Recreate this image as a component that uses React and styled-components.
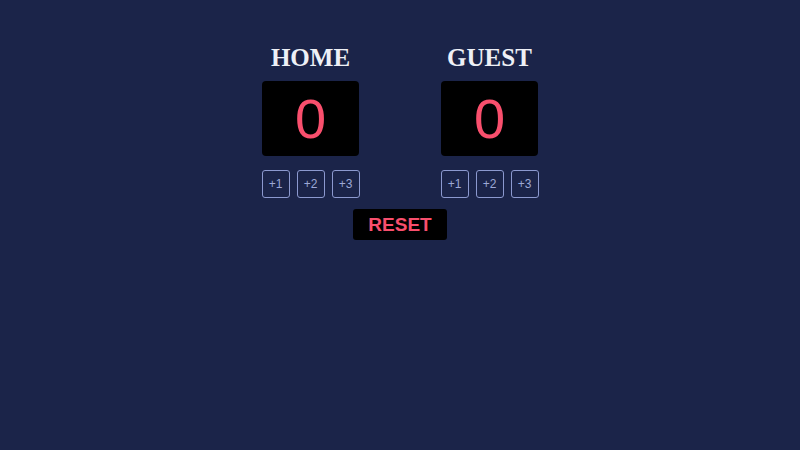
import React, { useState } from 'react'
import styled, { createGlobalStyle } from 'styled-components'

const GlobalStyle = createGlobalStyle`
  html, body {
    margin: 0;
    padding: 0;
    background: #1b2449;
    height: 100%;
  }
`

const Board = styled.main`
  display: flex;
  flex-direction: column;
  align-items: center;
  padding-top: 44px;
  font-family: "Liberation Sans", Arial, sans-serif;
`

const Teams = styled.div`
  display: flex;
  gap: 82px;
`

const Team = styled.section`
  display: flex;
  flex-direction: column;
  align-items: center;
  width: 97px;
`

const TeamName = styled.h2`
  margin: 0 0 9px;
  font-family: "Liberation Serif", "Times New Roman", serif;
  font-size: 25px;
  line-height: 28px;
  font-weight: 700;
  color: #eef0f6;
  white-space: nowrap;
`

const Score = styled.div`
  width: 97px;
  height: 75px;
  background: #000;
  border-radius: 4px;
  display: flex;
  align-items: center;
  justify-content: center;
  color: #f94f6d;
  font-size: 56px;
  line-height: 1;
`

const Buttons = styled.div`
  display: flex;
  gap: 7px;
  margin-top: 14px;
`

const AddButton = styled.button`
  width: 28px;
  height: 28px;
  padding: 0;
  background: transparent;
  border: 1px solid #8c99cf;
  border-radius: 3px;
  color: #9da8d6;
  font-family: "Liberation Sans", Arial, sans-serif;
  font-size: 12px;
  cursor: pointer;
`

const Reset = styled.button`
  margin-top: 11px;
  width: 94px;
  height: 31px;
  padding: 0;
  background: #000;
  border: none;
  border-radius: 3px;
  color: #f94f6d;
  font-family: "Liberation Sans", Arial, sans-serif;
  font-size: 19px;
  font-weight: 700;
  cursor: pointer;
`

const TeamPanel = ({ name, score, onAdd }) => (
  <Team>
    <TeamName>{name}</TeamName>
    <Score>{score}</Score>
    <Buttons>
      {[1, 2, 3].map(n => (
        <AddButton key={n} onClick={() => onAdd(n)}>+{n}</AddButton>
      ))}
    </Buttons>
  </Team>
)

const App = () => {
  const [home, setHome] = useState(0)
  const [guest, setGuest] = useState(0)

  return (
    <>
      <GlobalStyle />
      <Board>
        <Teams>
          <TeamPanel name="HOME" score={home} onAdd={n => setHome(home + n)} />
          <TeamPanel name="GUEST" score={guest} onAdd={n => setGuest(guest + n)} />
        </Teams>
        <Reset onClick={() => { setHome(0); setGuest(0) }}>RESET</Reset>
      </Board>
    </>
  )
}

export default App
